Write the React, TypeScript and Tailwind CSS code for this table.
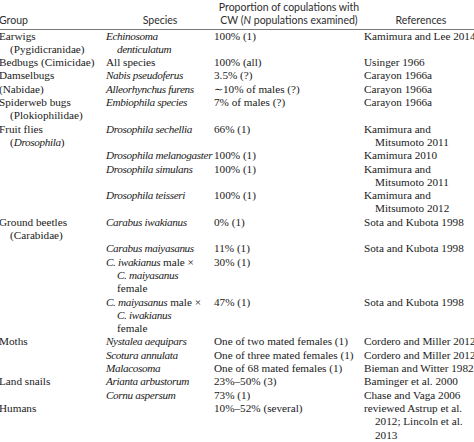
import type { ReactNode } from "react"

type Row = [ReactNode, ReactNode, ReactNode, ReactNode]

const I = ({ children }: { children: ReactNode }) => (
  <i className="tracking-[-0.35px]">{children}</i>
)

const rows: Row[] = [
  [<>Earwigs<br />(Pygidicranidae)</>, <><I>Echinosoma</I><br /><I>denticulatum</I></>, "100% (1)", "Kamimura and Lee 2014"],
  ["Bedbugs (Cimicidae)", "All species", "100% (all)", "Usinger 1966"],
  ["Damselbugs", <I>Nabis pseudoferus</I>, "3.5% (?)", "Carayon 1966a"],
  ["(Nabidae)", <I>Alleorhynchus furens</I>, "∼10% of males (?)", "Carayon 1966a"],
  [<>Spiderweb bugs<br />(Plokiophilidae)</>, <I>Embiophila species</I>, "7% of males (?)", "Carayon 1966a"],
  [<>Fruit flies<br />(<I>Drosophila</I>)</>, <I>Drosophila sechellia</I>, "66% (1)", <>Kamimura and<br />Mitsumoto 2011</>],
  ["", <I>Drosophila melanogaster</I>, "100% (1)", "Kamimura 2010"],
  ["", <I>Drosophila simulans</I>, "100% (1)", <>Kamimura and<br />Mitsumoto 2011</>],
  ["", <I>Drosophila teisseri</I>, "100% (1)", <>Kamimura and<br />Mitsumoto 2012</>],
  [<>Ground beetles<br />(Carabidae)</>, <I>Carabus iwakianus</I>, "0% (1)", "Sota and Kubota 1998"],
  ["", <I>Carabus maiyasanus</I>, "11% (1)", "Sota and Kubota 1998"],
  ["", <><I>C. iwakianus</I> male ×<br /><I>C. maiyasanus</I><br />female</>, "30% (1)", ""],
  ["", <><I>C. maiyasanus</I> male ×<br /><I>C. iwakianus</I><br />female</>, "47% (1)", "Sota and Kubota 1998"],
  ["Moths", <I>Nystalea aequipars</I>, "One of two mated females (1)", "Cordero and Miller 2012"],
  ["", <I>Scotura annulata</I>, "One of three mated females (1)", "Cordero and Miller 2012"],
  ["", <I>Malacosoma</I>, "One of 68 mated females (1)", "Bieman and Witter 1982"],
  ["Land snails", <I>Arianta arbustorum</I>, "23%–50% (3)", "Baminger et al. 2000"],
  ["", <I>Cornu aspersum</I>, "73% (1)", "Chase and Vaga 2006"],
  ["Humans", "", "10%–52% (several)", <>reviewed Astrup et al.<br />2012; Lincoln et al.<br />2013</>],
]

function Cell({ children }: { children: ReactNode }) {
  return <div className="pl-[11px] -indent-[11px] whitespace-nowrap">{children}</div>
}

export default function App() {
  return (
    <div className="w-[474px] h-[442px] overflow-hidden bg-white text-[#1a1a1a]">
      <div className="-ml-[1px] w-[479px]">
        <div className="grid grid-cols-[107px_108px_150px_114px] items-end pt-[1px] pb-[1px] border-b border-[#7a7a7a] font-['Lato',sans-serif] text-[10.5px] leading-[13.3px] text-[#2e2e2e]">
          <div>Group</div>
          <div className="text-center">Species</div>
          <div className="text-center whitespace-nowrap">
            Proportion of copulations with<br />CW (<i>N</i> populations examined)
          </div>
          <div className="text-center">References</div>
        </div>
        <div className="grid grid-cols-[107px_108px_150px_114px] font-['Liberation_Serif',serif] text-[11.2px] leading-[13.3px]">
          {rows.map((r, i) =>
            r.map((c, j) => <Cell key={i + "-" + j}>{c}</Cell>)
          )}
        </div>
      </div>
    </div>
  )
}
